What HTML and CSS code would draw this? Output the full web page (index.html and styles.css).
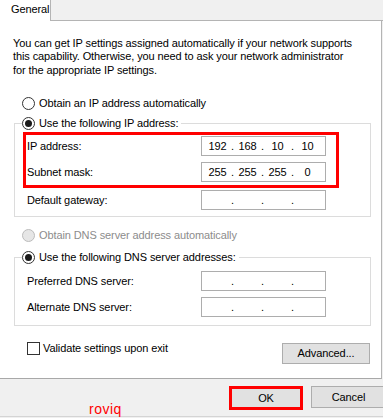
FILE: index.html
```html
<!DOCTYPE html>
<html lang="en">
<head>
<meta charset="utf-8">
<title>IPv4 Properties</title>
<link rel="stylesheet" href="styles.css">
</head>
<body>
<div class="tabs">
  <div class="tab">General</div>
  <div class="tab-fill"></div>
</div>
<div class="panel">
  <p class="intro">You can get IP settings assigned automatically if your network supports this capability. Otherwise, you need to ask your network administrator for the appropriate IP settings.</p>

  <div class="radio-row ip-auto"><span class="radio"></span><span>Obtain an IP address automatically</span></div>

  <div class="group ip-group">
    <div class="group-head"><span class="radio checked"></span><span>Use the following IP address:</span></div>
    <div class="highlight">
      <div class="row"><span class="lbl">IP address:</span>
        <div class="ipbox"><span class="seg">192</span><span class="dot">.</span><span class="seg">168</span><span class="dot">.</span><span class="seg">10</span><span class="dot">.</span><span class="seg">10</span></div>
      </div>
      <div class="row"><span class="lbl">Subnet mask:</span>
        <div class="ipbox"><span class="seg">255</span><span class="dot">.</span><span class="seg">255</span><span class="dot">.</span><span class="seg">255</span><span class="dot">.</span><span class="seg">0</span></div>
      </div>
    </div>
    <div class="row plain-row"><span class="lbl">Default gateway:</span>
      <div class="ipbox"><span class="seg"></span><span class="dot">.</span><span class="seg"></span><span class="dot">.</span><span class="seg"></span><span class="dot">.</span><span class="seg"></span></div>
    </div>
  </div>

  <div class="radio-row dns-auto disabled"><span class="radio"></span><span>Obtain DNS server address automatically</span></div>

  <div class="group dns-group">
    <div class="group-head"><span class="radio checked"></span><span>Use the following DNS server addresses:</span></div>
    <div class="row plain-row"><span class="lbl">Preferred DNS server:</span>
      <div class="ipbox"><span class="seg"></span><span class="dot">.</span><span class="seg"></span><span class="dot">.</span><span class="seg"></span><span class="dot">.</span><span class="seg"></span></div>
    </div>
    <div class="row plain-row"><span class="lbl">Alternate DNS server:</span>
      <div class="ipbox"><span class="seg"></span><span class="dot">.</span><span class="seg"></span><span class="dot">.</span><span class="seg"></span><span class="dot">.</span><span class="seg"></span></div>
    </div>
  </div>

  <div class="bottom-row">
    <div class="check"><span class="box"></span><span>Validate settings upon exit</span></div>
    <div class="btn btn-adv">Advanced...</div>
  </div>
</div>
<div class="footer">
  <span class="sig">roviq</span>
  <div class="btn ok">OK</div>
  <div class="btn cancel">Cancel</div>
</div>
</body>
</html>
```

FILE: styles.css
```css
* { box-sizing: border-box; }
html, body { margin: 0; padding: 0; }
body {
  width: 383px;
  height: 418px;
  overflow: hidden;
  background: #f0f0f0;
  font-family: "Liberation Sans", Arial, sans-serif;
  font-size: 11px;
  letter-spacing: -0.1px;
  color: #000;
}

.tabs { display: flex; height: 21px; }
.tab {
  width: 51px;
  height: 21px;
  background: #fff;
  border-right: 1px solid #b4b4b4;
  padding: 3px 0 0 11px;
  line-height: 13px;
}
.tab-fill { flex: 1; border-bottom: 1px solid #b4b4b4; }

.panel {
  width: 382px;
  height: 358px;
  background: #fff;
  border-right: 1px solid #b4b4b4;
  border-bottom: 1px solid #a8a8a8;
  padding-top: 16px;
}

.intro { margin: 0 0 0 13px; line-height: 13.33px; width: 345px; }

.radio-row {
  display: flex;
  align-items: center;
  height: 13px;
  padding-left: 22px;
  gap: 4px;
}
.ip-auto { margin-top: 20px; }
.dns-auto { margin-top: 12px; }
.disabled { color: #8c8c8c; }

.radio {
  width: 13px;
  height: 13px;
  border: 1px solid #333;
  border-radius: 50%;
  background: #fff;
  flex-shrink: 0;
  display: flex;
  align-items: center;
  justify-content: center;
}
.radio.checked::after {
  content: "";
  width: 7px;
  height: 7px;
  border-radius: 50%;
  background: #1a1a1a;
}
.disabled .radio { border-color: #bcbcbc; background: #e6e6e6; }

.group {
  margin-left: 14px;
  width: 357px;
  border: 1px solid #dcdcdc;
}
.ip-group { margin-top: 13px; padding-bottom: 6px; }
.dns-group { margin-top: 15px; padding-bottom: 8px; }

.group-head {
  display: flex;
  align-items: center;
  gap: 4px;
  height: 13px;
  width: fit-content;
  margin: -7px 0 0 7px;
  padding-right: 3px;
  background: #fff;
}

.highlight {
  margin: 2px 0 0 8px;
  width: 316px;
  border: 3px solid #f00;
  padding: 1px 0 3px 1px;
}
.highlight .row + .row { margin-top: 6px; }

.row { display: flex; align-items: center; height: 20px; }
.lbl { width: 174px; flex-shrink: 0; }
.plain-row { margin-left: 12px; }
.ip-group .plain-row { margin-top: 2px; }
.dns-group .plain-row { margin-top: 6px; }
.dns-group .group-head + .plain-row { margin-top: 7px; }

.ipbox {
  width: 125px;
  height: 20px;
  border: 1px solid #adadad;
  display: flex;
  align-items: center;
  padding-left: 2px;
  background: #fff;
}
.seg { width: 27px; text-align: center; flex-shrink: 0; }
.dot { width: 3px; text-align: center; flex-shrink: 0; }

.bottom-row {
  display: flex;
  align-items: flex-start;
  margin-top: 16px;
  padding-left: 27px;
}
.check { display: flex; align-items: center; gap: 3px; height: 13px; }
.box {
  width: 13px;
  height: 13px;
  border: 1px solid #333;
  background: #fff;
  flex-shrink: 0;
}

.btn {
  display: flex;
  align-items: center;
  justify-content: center;
  background: #e1e1e1;
  border: 1px solid #adadad;
  flex-shrink: 0;
}
.btn-adv {
  margin-left: auto;
  margin-right: 11px;
  margin-top: 1px;
  width: 88px;
  height: 21px;
}

.footer {
  display: flex;
  align-items: flex-start;
  height: 38px;
  padding-top: 7px;
  border-bottom: 1px solid #d4d4d4;
}
.sig {
  margin-left: 89px;
  width: 140px;
  flex-shrink: 0;
  margin-top: 16px;
  color: #f00;
  font-size: 14px;
  line-height: 14px;
  letter-spacing: 0.5px;
}
.ok {
  width: 74px;
  height: 24px;
  border: 3px solid #f00;
}
.cancel {
  margin-left: 8px;
  width: 75px;
  height: 22px;
}
```
